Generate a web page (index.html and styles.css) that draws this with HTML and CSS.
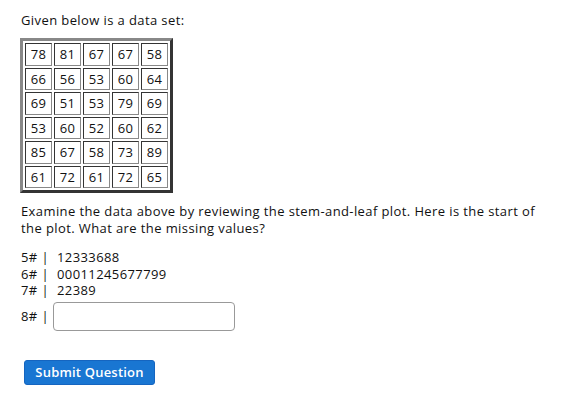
FILE: index.html
```html
<!DOCTYPE html>
<html lang="en">
<head>
    <meta charset="UTF-8">
    <title>Question</title>
    <link rel="stylesheet" href="styles.css">
</head>
<body>
    <div class="question">
        <p class="intro">Given below is a data set:</p>

        <table class="data-set">
            <tr><td>78</td><td>81</td><td>67</td><td>67</td><td>58</td></tr>
            <tr><td>66</td><td>56</td><td>53</td><td>60</td><td>64</td></tr>
            <tr><td>69</td><td>51</td><td>53</td><td>79</td><td>69</td></tr>
            <tr><td>53</td><td>60</td><td>52</td><td>60</td><td>62</td></tr>
            <tr><td>85</td><td>67</td><td>58</td><td>73</td><td>89</td></tr>
            <tr><td>61</td><td>72</td><td>61</td><td>72</td><td>65</td></tr>
        </table>

        <p class="prompt">Examine the data above by reviewing the stem-and-leaf plot. Here is the start of the plot. What are the missing values?</p>

        <div class="plot">
            <div class="plot-row"><span class="stem">5# |</span><span class="leaf">12333688</span></div>
            <div class="plot-row"><span class="stem">6# |</span><span class="leaf">00011245677799</span></div>
            <div class="plot-row"><span class="stem">7# |</span><span class="leaf">22389</span></div>
            <div class="plot-row answer-row"><span class="stem">8# |</span><input type="text" class="answer"></div>
        </div>

        <button class="submit">Submit Question</button>
    </div>
</body>
</html>
```

FILE: styles.css
```css
* {
    box-sizing: border-box;
}

body {
    margin: 0;
    padding: 12px 21px;
    font-family: 'Open Sans', sans-serif;
    font-size: 13px;
    letter-spacing: 0.4px;
    color: #111;
    background: #fff;
}

.intro {
    margin: 0 0 9px;
    line-height: 17px;
}

.data-set {
    border: 3px outset #888;
    border-spacing: 2px;
    margin-left: -1px;
}

.data-set td {
    border: 1px inset #888;
    padding: 1px 4px;
    height: 22.5px;
    width: 27px;
    text-align: center;
    letter-spacing: 0.2px;
}

.prompt {
    margin: 10px 0 12px;
    line-height: 17px;
}

.plot-row {
    display: flex;
    align-items: center;
    line-height: 16.5px;
}

.stem {
    width: 36px;
    white-space: pre;
}

.answer-row {
    margin-top: 3px;
}

.answer {
    width: 182px;
    height: 29px;
    border: 1px solid #999;
    border-radius: 4px;
    margin-left: -4px;
    font: inherit;
}

.submit {
    display: block;
    margin: 29px 0 0 3px;
    width: 131px;
    height: 25px;
    background: #1976d2;
    color: #fff;
    border: 1px solid #1565c0;
    border-radius: 3px;
    font-family: 'Open Sans', sans-serif;
    font-size: 13px;
    font-weight: 600;
    letter-spacing: 0.2px;
}
```
